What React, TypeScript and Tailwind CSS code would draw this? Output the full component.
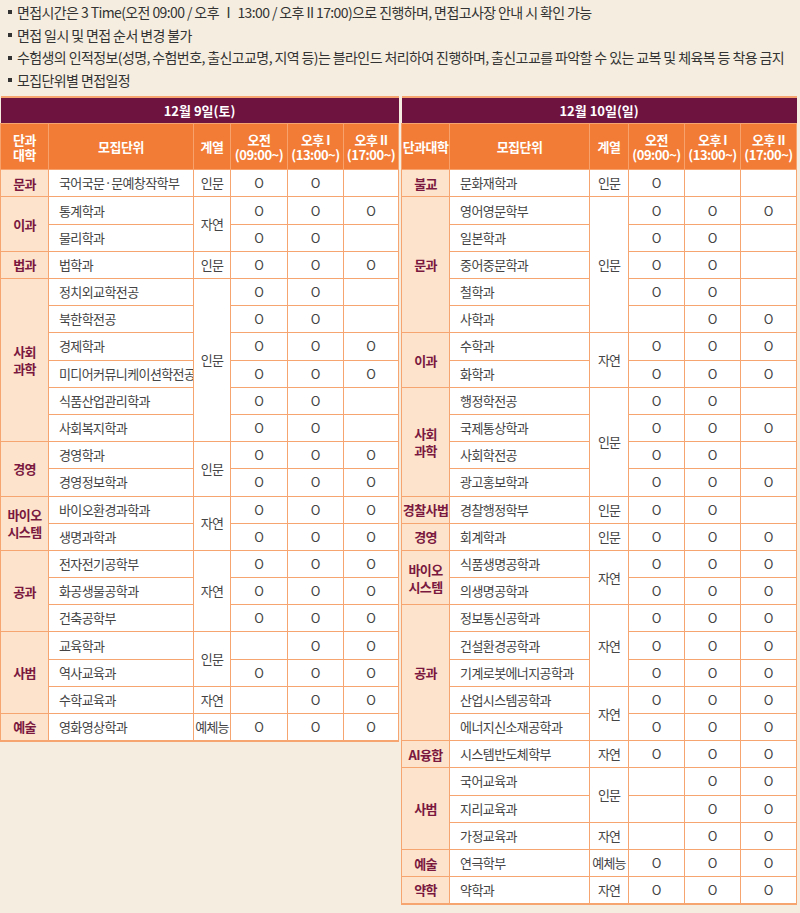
import React from "react";

type Row = { c?: [string, number]; u: string; s?: [string, number]; o: string };

const left: Row[] = [
  { c: ["문과", 1], u: "국어국문·문예창작학부", s: ["인문", 1], o: "OO-" },
  { c: ["이과", 2], u: "통계학과", s: ["자연", 2], o: "OOO" },
  { u: "물리학과", o: "OO-" },
  { c: ["법과", 1], u: "법학과", s: ["인문", 1], o: "OOO" },
  { c: ["사회\n과학", 6], u: "정치외교학전공", s: ["인문", 6], o: "OO-" },
  { u: "북한학전공", o: "OO-" },
  { u: "경제학과", o: "OOO" },
  { u: "미디어커뮤니케이션학전공", o: "OOO" },
  { u: "식품산업관리학과", o: "OO-" },
  { u: "사회복지학과", o: "OO-" },
  { c: ["경영", 2], u: "경영학과", s: ["인문", 2], o: "OOO" },
  { u: "경영정보학과", o: "OOO" },
  { c: ["바이오\n시스템", 2], u: "바이오환경과학과", s: ["자연", 2], o: "OOO" },
  { u: "생명과학과", o: "OOO" },
  { c: ["공과", 3], u: "전자전기공학부", s: ["자연", 3], o: "OOO" },
  { u: "화공생물공학과", o: "OOO" },
  { u: "건축공학부", o: "OOO" },
  { c: ["사범", 3], u: "교육학과", s: ["인문", 2], o: "-OO" },
  { u: "역사교육과", o: "OOO" },
  { u: "수학교육과", s: ["자연", 1], o: "-OO" },
  { c: ["예술", 1], u: "영화영상학과", s: ["예체능", 1], o: "OOO" },
];

const right: Row[] = [
  { c: ["불교", 1], u: "문화재학과", s: ["인문", 1], o: "O--" },
  { c: ["문과", 5], u: "영어영문학부", s: ["인문", 5], o: "OOO" },
  { u: "일본학과", o: "OO-" },
  { u: "중어중문학과", o: "OO-" },
  { u: "철학과", o: "OO-" },
  { u: "사학과", o: "-OO" },
  { c: ["이과", 2], u: "수학과", s: ["자연", 2], o: "OOO" },
  { u: "화학과", o: "OOO" },
  { c: ["사회\n과학", 4], u: "행정학전공", s: ["인문", 4], o: "OO-" },
  { u: "국제통상학과", o: "OOO" },
  { u: "사회학전공", o: "OO-" },
  { u: "광고홍보학과", o: "OOO" },
  { c: ["경찰사법", 1], u: "경찰행정학부", s: ["인문", 1], o: "OO-" },
  { c: ["경영", 1], u: "회계학과", s: ["인문", 1], o: "OOO" },
  { c: ["바이오\n시스템", 2], u: "식품생명공학과", s: ["자연", 2], o: "OOO" },
  { u: "의생명공학과", o: "OOO" },
  { c: ["공과", 5], u: "정보통신공학과", s: ["자연", 3], o: "OOO" },
  { u: "건설환경공학과", o: "OOO" },
  { u: "기계로봇에너지공학과", o: "OOO" },
  { u: "산업시스템공학과", s: ["자연", 2], o: "OOO" },
  { u: "에너지신소재공학과", o: "OOO" },
  { c: ["AI융합", 1], u: "시스템반도체학부", s: ["자연", 1], o: "OOO" },
  { c: ["사범", 3], u: "국어교육과", s: ["인문", 2], o: "-OO" },
  { u: "지리교육과", o: "-OO" },
  { u: "가정교육과", s: ["자연", 1], o: "-OO" },
  { c: ["예술", 1], u: "연극학부", s: ["예체능", 1], o: "OOO" },
  { c: ["약학", 1], u: "약학과", s: ["자연", 1], o: "OOO" },
];

const bd = "border border-[#f6a570] p-0";

function Table({ title, rows, cols, college }: { title: string; rows: Row[]; cols: number[]; college: React.ReactNode }) {
  const h = "bg-[#f27c35] text-white font-bold text-[13px] leading-[15px] text-center border border-[#f7a26c] p-0 tracking-[-0.5px] whitespace-nowrap";
  return (
    <table className="table-fixed border-collapse border-t-2 border-b-2 border-[#f6a570]" style={{ width: cols.reduce((a, b) => a + b, 0) }}>
      <colgroup>
        {cols.map((w, i) => (
          <col key={i} style={{ width: w }} />
        ))}
      </colgroup>
      <thead>
        <tr className="h-[27px]">
          <th colSpan={6} className="bg-[#6e1240] text-white font-bold text-[13px] text-center border-b border-[#f6a570] p-0">
            {title}
          </th>
        </tr>
        <tr className="h-[46px]">
          <th className={h}>{college}</th>
          <th className={h}>모집단위</th>
          <th className={h}>계열</th>
          <th className={h}>오전<br />(09:00~)</th>
          <th className={h}>오후 I<br />(13:00~)</th>
          <th className={h}>오후 II<br />(17:00~)</th>
        </tr>
      </thead>
      <tbody>
        {rows.map((r, i) => (
          <tr key={i} className="h-[27.2px] text-[13px] leading-[16px] text-[#444]">
            {r.c && (
              <td rowSpan={r.c[1]} className={`${bd} bg-[#fde3cb] text-center font-bold text-[#7a1840] leading-[17px] whitespace-pre-line tracking-[-0.6px]`}>
                {r.c[0]}
              </td>
            )}
            <td className={`${bd} bg-white pl-[10px] whitespace-nowrap overflow-hidden tracking-[-0.6px]`}>{r.u}</td>
            {r.s && (
              <td rowSpan={r.s[1]} className={`${bd} bg-white text-center whitespace-nowrap tracking-[-0.8px]`}>
                {r.s[0]}
              </td>
            )}
            {r.o.split("").map((x, j) => (
              <td key={j} className={`${bd} bg-white text-center`}>
                {x === "O" ? "O" : ""}
              </td>
            ))}
          </tr>
        ))}
      </tbody>
    </table>
  );
}

const bullets = [
  "면접시간은 3 Time(오전 09:00 / 오후 Ⅰ 13:00 / 오후 II 17:00)으로 진행하며, 면접고사장 안내 시 확인 가능",
  "면접 일시 및 면접 순서 변경 불가",
  "수험생의 인적정보(성명, 수험번호, 출신고교명, 지역 등)는 블라인드 처리하여 진행하며, 출신고교를 파악할 수 있는 교복 및 체육복 등 착용 금지",
  "모집단위별 면접일정",
];

export default function App() {
  return (
    <div className="w-[800px] h-[913px] bg-[#f5eee0] overflow-hidden" style={{ fontFamily: '"Noto Sans CJK KR", "Noto Sans", sans-serif' }}>
      <div className="pt-[1px] pb-[6px]">
        {bullets.map((b, i) => (
          <div key={i} className="flex items-center h-[22.7px] pl-[8px] text-[14px] text-[#333] tracking-[-0.6px] whitespace-nowrap">
            <span className="w-[4px] h-[4px] bg-[#333] mr-[5px] shrink-0" />
            {b}
          </div>
        ))}
      </div>
      <div className="flex gap-[2px] items-start mt-[-2px]">
        <Table title="12월 9일(토)" rows={left} cols={[48, 145, 37, 57, 56, 55]} college={<>단과<br />대학</>} />
        <Table title="12월 10일(일)" rows={right} cols={[48, 140, 39, 56, 56, 56]} college="단과대학" />
      </div>
    </div>
  );
}
